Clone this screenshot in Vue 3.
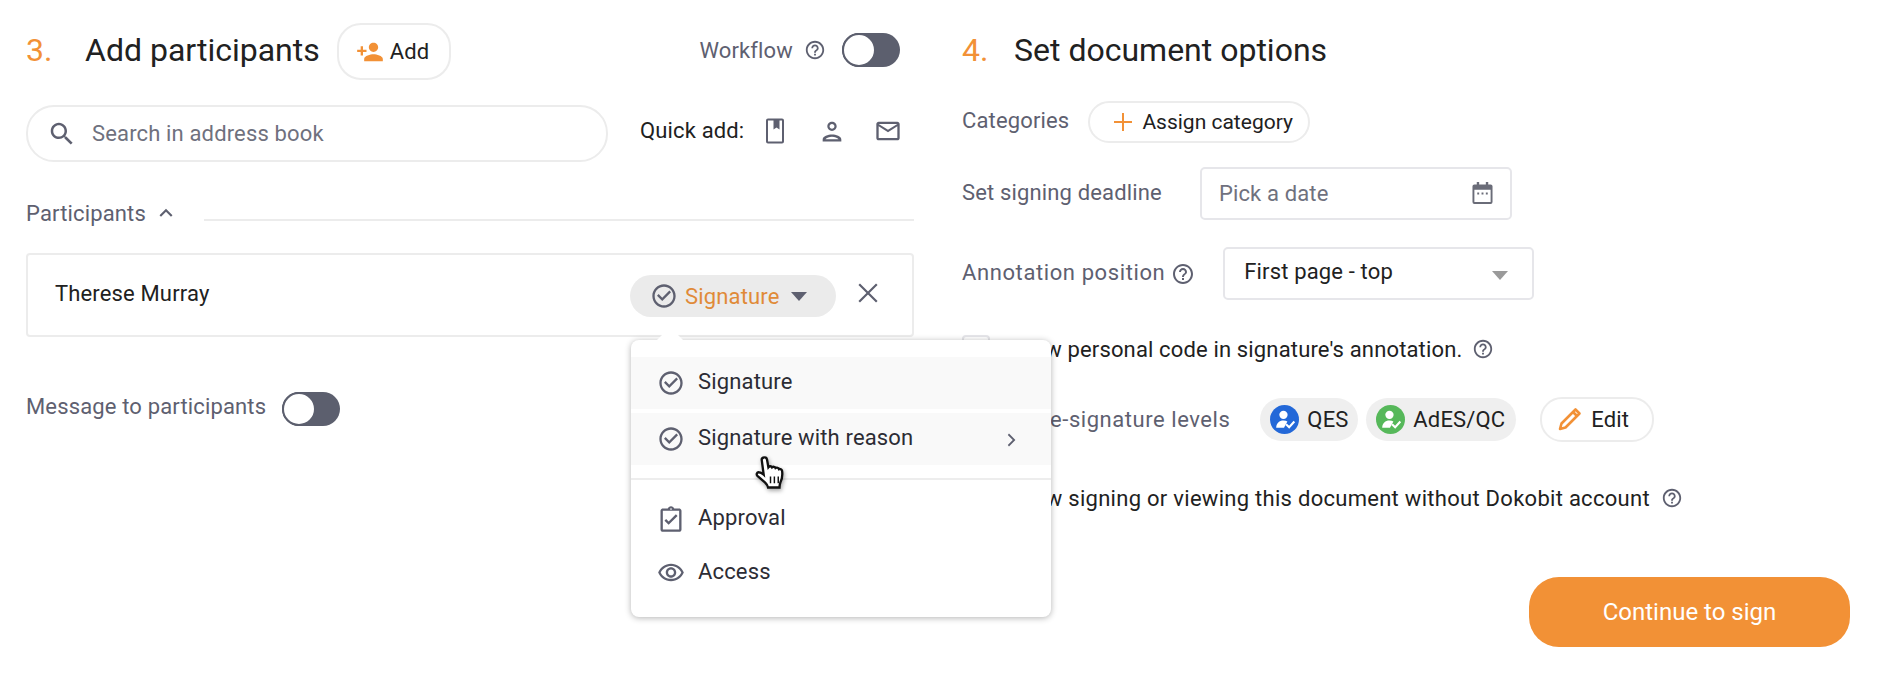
<script setup>
const help = 'M11 18h2v-2h-2v2zm1-16C6.48 2 2 6.48 2 12s4.48 10 10 10 10-4.48 10-10S17.52 2 12 2zm0 18c-4.41 0-8-3.59-8-8s3.59-8 8-8 8 3.59 8 8-3.59 8-8 8zm0-14c-2.21 0-4 1.79-4 4h2c0-1.1.9-2 2-2s2 .9 2 2c0 2-3 1.75-3 5h2c0-2.25 3-2.5 3-5 0-2.21-1.79-4-4-4z'
const checkCircle = 'M12 2C6.48 2 2 6.48 2 12s4.48 10 10 10 10-4.48 10-10S17.52 2 12 2zm0 18c-4.41 0-8-3.59-8-8s3.59-8 8-8 8 3.59 8 8-3.59 8-8 8zm4.6-12.7L10.5 13.4l-3.1-3.1L6 11.7l4.5 4.5 7.5-7.5z'
const clipboard = 'M19 3h-4.18C14.4 1.84 13.3 1 12 1s-2.4.84-2.82 2H5c-1.1 0-2 .9-2 2v16c0 1.1.9 2 2 2h14c1.1 0 2-.9 2-2V5c0-1.1-.9-2-2-2zm-7-.25c.41 0 .75.34.75.75s-.34.75-.75.75-.75-.34-.75-.75.34-.75.75-.75zM19 21H5V5h14v16zm-1.4-11.6L16.2 8l-6.2 6.2-2.2-2.2-1.4 1.4 3.6 3.6 7.6-7.6z'
const eye = 'M12 6c3.79 0 7.17 2.13 8.82 5.5C19.17 14.87 15.79 17 12 17s-7.17-2.13-8.82-5.5C4.83 8.13 8.21 6 12 6m0-2C7 4 2.73 7.11 1 11.5 2.73 15.89 7 19 12 19s9.27-3.11 11-7.5C21.27 7.11 17 4 12 4zm0 5c1.38 0 2.5 1.12 2.5 2.5S13.38 14 12 14s-2.5-1.12-2.5-2.5S10.62 9 12 9m0-2c-2.48 0-4.5 2.02-4.5 4.5S9.52 16 12 16s4.5-2.02 4.5-4.5S14.48 7 12 7z'
const menu = [
  { label: 'Signature', icon: checkCircle, hover: true },
  { label: 'Signature with reason', icon: checkCircle, hover: true, more: true },
]
const menu2 = [
  { label: 'Approval', icon: clipboard },
  { label: 'Access', icon: eye },
]
</script>

<template>
  <div class="page">
    <section class="col left">
      <header class="head">
        <span class="num">3.</span>
        <h2 class="title">Add participants</h2>
        <button class="btn add">
          <svg class="ic-add" viewBox="0 0 24 24"><path d="M15 12c2.21 0 4-1.79 4-4s-1.79-4-4-4-4 1.79-4 4 1.79 4 4 4zm-9-2V7H4v3H1v2h3v3h2v-3h3v-2H6zm9 4c-2.67 0-8 1.34-8 4v2h16v-2c0-2.66-5.33-4-8-4z"/></svg>
          Add
        </button>
        <div class="workflow">
          <span class="muted">Workflow</span>
          <svg class="ic-help" viewBox="0 0 24 24"><path :d="help"/></svg>
          <span class="toggle"><i></i></span>
        </div>
      </header>

      <div class="search-row">
        <div class="search">
          <svg class="ic-search" viewBox="0 0 24 24"><path d="M15.5 14h-.79l-.28-.27C15.41 12.59 16 11.11 16 9.5 16 5.91 13.09 3 9.5 3S3 5.91 3 9.5 5.91 16 9.5 16c1.61 0 3.09-.59 4.23-1.57l.27.28v.79l5 4.99L20.49 19l-4.99-5zm-6 0C7.01 14 5 11.99 5 9.5S7.01 5 9.5 5 14 7.01 14 9.5 11.99 14 9.5 14z"/></svg>
          <span class="placeholder">Search in address book</span>
        </div>
        <div class="quick">
          <span class="quick-label">Quick add:</span>
          <svg class="q q-book" viewBox="0 0 20 26"><path fill-rule="evenodd" d="M3 0.500h14a2 2 0 0 1 2 2v21a2 2 0 0 1-2 2H3a2 2 0 0 1-2-2v-21a2 2 0 0 1 2-2zm0 2v21h14v-21h-2.500v9l-3-2-3 2v-9z"/></svg>
          <svg class="q q-person" viewBox="0 0 24 24"><path d="M12 5.900c1.160 0 2.100.940 2.100 2.100s-.940 2.100-2.100 2.100S9.900 9.160 9.900 8s.940-2.100 2.100-2.100M12 4C9.790 4 8 5.790 8 8s1.790 4 4 4 4-1.790 4-4-1.790-4-4-4zm0 11c-3.400 0-8 1.600-8 4.200V21h16v-1.800c0-2.600-4.600-4.200-8-4.200zm0 2c2.300 0 4.700.900 5.600 2H6.400c.900-1.100 3.300-2 5.600-2z"/></svg>
          <svg class="q q-mail" viewBox="0 0 24 24"><path d="M22 6c0-1.100-.900-2-2-2H4c-1.100 0-2 .900-2 2v12c0 1.100.900 2 2 2h16c1.100 0 2-.900 2-2V6zm-2 0l-8 5-8-5h16zm0 12H4V8l8 5 8-5v10z"/></svg>
        </div>
      </div>

      <div class="section-line">
        <span class="muted">Participants</span>
        <svg class="chev" viewBox="0 0 24 24"><path d="M7.400 15.400L12 10.800l4.600 4.600L18 14l-6-6-6 6z"/></svg>
        <span class="rule"></span>
      </div>

      <div class="card">
        <span class="name">Therese Murray</span>
        <div class="pill-wrap">
          <div class="pill">
            <svg class="ic-check" viewBox="0 0 24 24"><path :d="checkCircle"/></svg>
            <span class="sig">Signature</span>
            <span class="caret"></span>
          </div>
          <div class="menu">
            <span class="arrow"></span>
            <div class="menu-top">
              <div v-for="m in menu" :key="m.label" class="item hover">
                <svg class="ic-item" viewBox="0 0 24 24"><path :d="m.icon"/></svg>
                <span class="item-label">{{ m.label }}</span>
                <svg v-if="m.more" class="ic-more" viewBox="0 0 24 24"><path d="M9 5.600L7.800 7l5 5-5 5L9 18.400l6.400-6.400z"/></svg>
              </div>
            </div>
            <div class="menu-bottom">
              <div v-for="m in menu2" :key="m.label" class="item">
                <svg class="ic-item" viewBox="0 0 24 24"><path :d="m.icon"/></svg>
                <span class="item-label">{{ m.label }}</span>
              </div>
            </div>
            <svg class="cursor" viewBox="0 0 32 35">
              <path d="M9 1.500c1.500-.5 3 .2 3.400 2l1.400 8c1-1.300 3-1.300 3.800.2 1.200-1 3-.8 3.600.6 1.300-.8 3-.2 3.500 1.200 1.200-.5 3 .3 3.300 2 .5 4 0 8-1.700 11.500-.5 1.500-1 3-1 5.500H13.500c-.4-2-1.500-3.500-3-5l-8-7c-1.500-1.500-.5-4 1.500-3.800 1.500 0 3.500 1.300 5 2.600L7 4.500C6.700 3 7.700 1.800 9 1.500z" fill="#fff" stroke="#111" stroke-width="2.400"/>
              <path d="M16 21v7M20 21v7M24 21v7" stroke="#111" stroke-width="1.500" fill="none"/>
            </svg>
          </div>
        </div>
        <svg class="ic-x" viewBox="0 0 20 20"><path d="M2 2l16 16M18 2L2 18" fill="none" stroke="#5e6070" stroke-width="2"/></svg>
      </div>

      <div class="message">
        <span class="muted">Message to participants</span>
        <span class="toggle"><i></i></span>
      </div>
    </section>

    <section class="col right">
      <header class="head head-r">
        <span class="num num-r">4.</span>
        <h2 class="title">Set document options</h2>
      </header>

      <div class="row r-cat">
        <span class="muted">Categories</span>
        <button class="btn assign">
          <svg class="ic-plus" viewBox="0 0 18 18"><path d="M9 0v18M0 9h18" fill="none" stroke="#f29136" stroke-width="2"/></svg>
          Assign category
        </button>
      </div>

      <div class="row r-date">
        <span class="muted">Set signing deadline</span>
        <div class="field date">
          <span class="placeholder">Pick a date</span>
          <svg class="ic-cal" viewBox="0 0 22 24"><path fill-rule="evenodd" d="M5 0h2.500v2.500h7V0H17v2.500h2.500a2 2 0 0 1 2 2V21a2 2 0 0 1-2 2h-17a2 2 0 0 1-2-2V4.500a2 2 0 0 1 2-2H5zM2.500 8v13h17V8z"/><path d="M5.500 11h2v2h-2zM10 11h2v2h-2zM14.500 11h2v2h-2z"/></svg>
        </div>
      </div>

      <div class="row r-anno">
        <span class="muted anno-label">Annotation position</span>
        <svg class="ic-help-lg" viewBox="0 0 24 24"><path :d="help"/></svg>
        <div class="field select">
          <span class="dark select-value">First page - top</span>
          <span class="caret caret-grey"></span>
        </div>
      </div>

      <div class="row r-code">
        <span class="checkbox"></span>
        <span class="dark">Show personal code in signature's annotation.</span>
        <svg class="ic-help" viewBox="0 0 24 24"><path :d="help"/></svg>
      </div>

      <div class="row r-levels">
        <span class="muted levels-label">Allowed e-signature levels</span>
        <span class="tag tag-q">
          <svg class="badge" viewBox="0 0 28 28"><circle cx="14" cy="14" r="14" fill="#2368d8"/><circle cx="13" cy="9.500" r="4" fill="#fff"/><path d="M6 22c0-4.500 3-7 7-7 1.500 0 2.800.3 3.800 1L13.500 22z" fill="#fff"/><path d="M15.500 18.500l3 3 5-5.500" fill="none" stroke="#fff" stroke-width="2"/></svg>
          QES
        </span>
        <span class="tag tag-a">
          <svg class="badge" viewBox="0 0 28 28"><circle cx="14" cy="14" r="14" fill="#56b85a"/><circle cx="13" cy="9.500" r="4" fill="#fff"/><path d="M6 22c0-4.500 3-7 7-7 1.500 0 2.800.3 3.800 1L13.500 22z" fill="#fff"/><path d="M15.500 18.500l3 3 5-5.500" fill="none" stroke="#fff" stroke-width="2"/></svg>
          AdES/QC
        </span>
        <button class="btn edit">
          <svg class="ic-edit" viewBox="0 0 24 24"><path d="M17.500 2.500l4 4L7.500 20.500 2 22l1.500-5.500z" fill="none" stroke="#f29136" stroke-width="2.600" stroke-linejoin="round"/><path d="M15 5l4 4" stroke="#f29136" stroke-width="2.600"/></svg>
          Edit
        </button>
      </div>

      <div class="row r-allow">
        <span class="checkbox"></span>
        <span class="dark allow-text">Allow signing or viewing this document without Dokobit account</span>
        <svg class="ic-help" viewBox="0 0 24 24"><path :d="help"/></svg>
      </div>

      <div class="submit-row">
        <button class="continue">Continue to sign</button>
      </div>
    </section>
  </div>
</template>

<style>
html, body { margin: 0; background: #fff; }
</style>

<style scoped>
.page {
  display: flex;
  width: 1881px;
  height: 683px;
  box-sizing: border-box;
  padding-left: 26px;
  gap: 48px;
  font-family: Roboto, "Liberation Sans", sans-serif;
  font-size: 22px;
  letter-spacing: 0.15px;
  color: #212121;
  overflow: hidden;
  background: #fff;
}
svg { display: block; flex: none; fill: currentColor; }
.col { display: flex; flex-direction: column; }
.left { width: 888px; color: #212121; }
.right { width: 888px; }
.muted { color: #5e6070; }
.dark { color: #212121; }
.head { display: flex; align-items: center; height: 57px; margin-top: 23px; }
.num { width: 59px; font-size: 32px; color: #f29136; letter-spacing: 0; margin-bottom: 3px; }
.title { margin: 0 0 3px; font-size: 32px; font-weight: 400; color: #212121; letter-spacing: 0; }
.btn {
  display: flex;
  align-items: center;
  box-sizing: border-box;
  border: 2px solid #ececec;
  background: #fff;
  font: inherit;
  letter-spacing: inherit;
  color: #212121;
  padding: 0;
}
.add { width: 114px; height: 57px; margin-left: 17px; border-radius: 24px; padding-left: 17px; gap: 6px; }
.ic-add { width: 28px; height: 28px; color: #f29136; }
.workflow { display: flex; align-items: center; margin-left: auto; margin-right: 14px; color: #5e6070; margin-bottom: 3px; }
.ic-help { width: 22px; height: 22px; color: #5e6070; margin-left: 11px; }
.toggle {
  display: block;
  box-sizing: border-box;
  width: 58px;
  height: 34px;
  border-radius: 17px;
  background: #5c5f6e;
  position: relative;
}
.toggle i {
  display: block;
  box-sizing: border-box;
  width: 34px;
  height: 34px;
  border-radius: 50%;
  background: #fff;
  border: 2px solid #5c5f6e;
}
.workflow .toggle { margin-left: 16px; }
.search-row { display: flex; align-items: center; margin-top: 25px; }
.search {
  display: flex;
  align-items: center;
  box-sizing: border-box;
  width: 582px;
  height: 57px;
  border: 2px solid #ececec;
  border-radius: 28px;
  padding-left: 19px;
}
.ic-search { width: 30px; height: 30px; color: #5e6070; }
.placeholder { color: #6f717e; margin-left: 15px; }
.quick { display: flex; align-items: center; margin-left: 32px; height: 57px; position: relative; top: -3px; }
.quick-label { color: #212121; margin-right: 21px; }
.q { color: #5e6070; }
.q-book { width: 20px; height: 26px; }
.q-person { width: 28px; height: 28px; margin-left: 33px; }
.q-mail { width: 28px; height: 28px; margin-left: 28px; }
.section-line { display: flex; align-items: center; height: 24px; margin-top: 39px; }
.chev { width: 26px; height: 26px; color: #5e6070; margin-left: 7px; }
.rule { flex: 1; height: 2px; margin-left: 25px; background: #ececec; position: relative; top: 7px; }
.card {
  display: flex;
  align-items: center;
  box-sizing: border-box;
  height: 84px;
  margin-top: 28px;
  padding: 0 33px 4px 27px;
  border: 2px solid #ececec;
  border-radius: 4px;
}
.name { flex: 1; }
.pill-wrap { position: relative; margin-top: 6px; }
.pill {
  display: flex;
  align-items: center;
  box-sizing: border-box;
  width: 206px;
  height: 42px;
  border-radius: 21px;
  background: #ebebeb;
  padding-left: 20px;
}
.ic-check { width: 28px; height: 28px; color: #5e6070; }
.sig { color: #e08a38; margin-left: 7px; }
.caret { width: 0; height: 0; border-left: 8px solid transparent; border-right: 8px solid transparent; border-top: 9px solid #5e6070; margin-left: 12px; }
.ic-x { width: 22px; height: 22px; margin-left: 21px; }
.menu {
  position: absolute;
  z-index: 5;
  left: 1px;
  top: 65px;
  box-sizing: border-box;
  width: 420px;
  height: 277px;
  padding-top: 17px;
  border-radius: 8px;
  background: #fff;
  box-shadow: 0 1px 6px rgba(0, 0, 0, 0.3);
}
.arrow {
  position: absolute;
  top: -13px;
  left: 26px;
  width: 0;
  height: 0;
  border-left: 13px solid transparent;
  border-right: 13px solid transparent;
  border-bottom: 13px solid #fff;
}
.menu-top { display: flex; flex-direction: column; gap: 4px; padding-bottom: 13px; border-bottom: 2px solid #ededed; }
.menu-bottom { display: flex; flex-direction: column; gap: 2px; padding-top: 13px; }
.item { display: flex; align-items: center; height: 52px; padding-left: 26px; color: #2c2c34; }
.item-label { margin-bottom: 3px; }
.item.hover { background: #f9f9f9; }
.ic-item { width: 28px; height: 28px; color: #5e6070; margin-right: 13px; }
.ic-more { width: 24px; height: 24px; color: #5e6070; margin-left: auto; margin-right: 27px; margin-top: 2px; }
.cursor { position: absolute; left: 124px; top: 116px; width: 31px; height: 34px; z-index: 6; filter: drop-shadow(1px 2px 2px rgba(0,0,0,0.35)); }
.message { display: flex; align-items: center; gap: 16px; margin-top: 55px; }
.message .muted { margin-bottom: 5px; }
.head-r { margin-bottom: 0; }
.num-r { width: 52px; }
.row { display: flex; align-items: center; }
.row > .muted { margin-bottom: 3px; }
.r-cat { margin-top: 21px; height: 42px; }
.assign { width: 222px; height: 42px; margin-left: 19px; border-radius: 21px; padding-left: 24px; gap: 10px; font-size: 21px; letter-spacing: 0; }
.ic-plus { width: 18px; height: 18px; }
.r-date { margin-top: 24px; height: 53px; }
.field {
  display: flex;
  align-items: center;
  box-sizing: border-box;
  height: 53px;
  border: 2px solid #e6e6ea;
  border-radius: 5px;
}
.date { width: 312px; margin-left: 38px; justify-content: space-between; padding-right: 17px; }
.date .placeholder { margin-left: 17px; }
.ic-cal { width: 21px; height: 23px; color: #6a6c78; }
.r-anno { margin-top: 27px; height: 53px; }
.anno-label { letter-spacing: 0.6px; }
.ic-help-lg { width: 24px; height: 24px; color: #5e6070; margin-left: 6px; }
.select { width: 311px; margin-left: 28px; padding: 0 24px 0 19px; justify-content: space-between; }
.select-value { margin-bottom: 4px; }
.caret-grey { border-top-color: #9a9a9a; margin-left: 0; margin-top: 4px; }
.r-code { margin-top: 34px; height: 30px; }
.r-code .ic-help { margin-left: 10px; }
.checkbox { box-sizing: border-box; width: 28px; height: 28px; border: 2px solid #e6e6ea; border-radius: 4px; margin-right: 17px; }
.r-levels { margin-top: 32px; height: 46px; }
.row > .levels-label { margin-bottom: 0; letter-spacing: 0.55px; }
.tag { display: flex; align-items: center; height: 43px; border-radius: 22px; background: #efefef; padding-left: 10px; gap: 8px; box-sizing: border-box; flex: none; }
.tag-q { width: 98px; margin-left: 30px; }
.tag-a { width: 150px; margin-left: 8px; }
.badge { width: 29px; height: 29px; }
.edit { width: 114px; height: 45px; margin-left: 24px; border-radius: 22px; padding-left: 16px; gap: 9px; }
.ic-edit { width: 24px; height: 24px; }
.r-allow { margin-top: 41px; height: 30px; }
.allow-text { letter-spacing: 0.28px; }
.submit-row { display: flex; justify-content: flex-end; margin-top: 64px; }
.continue {
  width: 321px;
  height: 70px;
  margin-right: 0;
  border: 0;
  border-radius: 30px;
  background: #f29136;
  color: #fff;
  font: inherit;
  font-size: 24px;
  letter-spacing: 0;
}
</style>
